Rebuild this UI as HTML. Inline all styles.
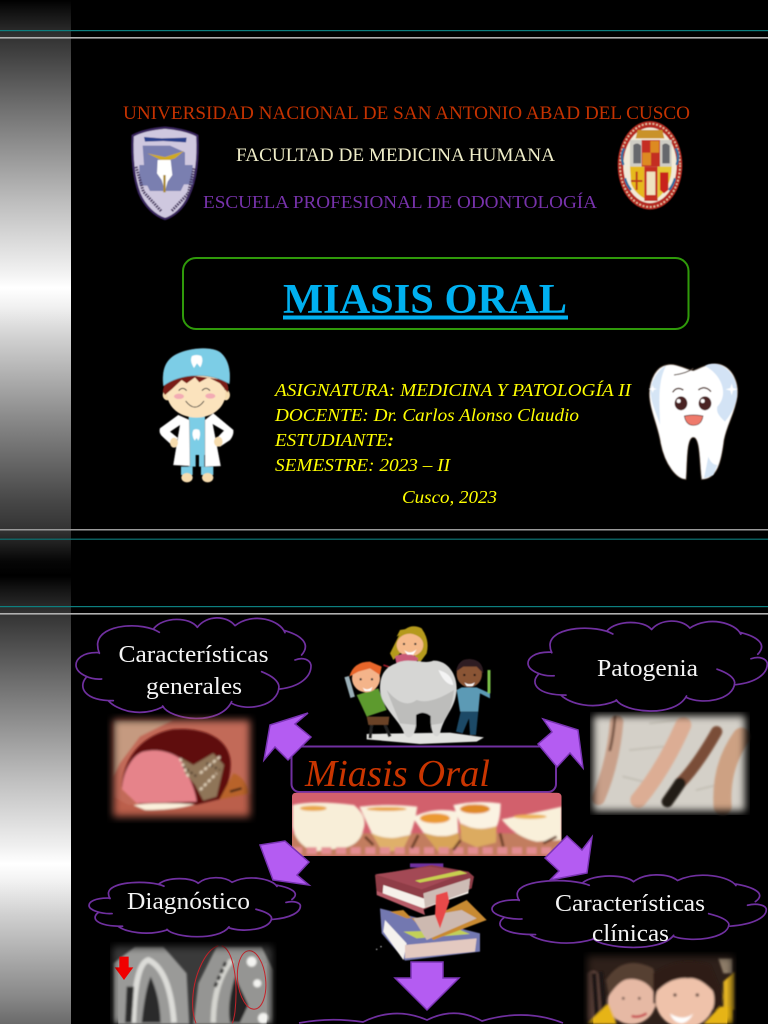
<!DOCTYPE html>
<html lang="es"><head><meta charset="utf-8"><title>Miasis Oral</title>
<style>html,body{margin:0;padding:0;background:#000;width:768px;height:1024px;overflow:hidden}svg{display:block}text{font-family:"Liberation Serif",serif}</style></head>
<body>
<svg xmlns="http://www.w3.org/2000/svg" width="768" height="1024" viewBox="0 0 768 1024">
<defs>
<linearGradient id="side" x1="0" y1="0" x2="0" y2="1">
<stop offset="0" stop-color="#000"/><stop offset=".02" stop-color="#111"/><stop offset=".066" stop-color="#333"/><stop offset=".18" stop-color="#6c6c6c"/><stop offset=".35" stop-color="#bdbdbd"/><stop offset=".47" stop-color="#f0f0f0"/><stop offset=".5" stop-color="#fff"/><stop offset=".53" stop-color="#f2f2f2"/><stop offset=".59" stop-color="#cfcfcf"/><stop offset=".73" stop-color="#888"/><stop offset=".87" stop-color="#474747"/><stop offset=".92" stop-color="#333"/><stop offset=".975" stop-color="#060606"/><stop offset="1" stop-color="#000"/>
</linearGradient>
<linearGradient id="side2" x1="0" y1="0" x2="0" y2="1">
<stop offset="0" stop-color="#000"/><stop offset=".0257" stop-color="#111"/><stop offset=".085" stop-color="#333"/><stop offset=".231" stop-color="#6c6c6c"/><stop offset=".45" stop-color="#bdbdbd"/><stop offset=".604" stop-color="#f0f0f0"/><stop offset=".643" stop-color="#fff"/><stop offset=".681" stop-color="#f2f2f2"/><stop offset=".759" stop-color="#cfcfcf"/><stop offset=".939" stop-color="#888"/><stop offset="1" stop-color="#6a6a6a"/>
</linearGradient>
<filter id="f" x="-2%" y="-20%" width="104%" height="140%"><feGaussianBlur stdDeviation=".3"/></filter>
<filter id="b1" x="-20%" y="-20%" width="140%" height="140%"><feGaussianBlur stdDeviation="3"/></filter>
<filter id="b3" x="-20%" y="-20%" width="140%" height="140%"><feGaussianBlur stdDeviation="12"/></filter>
<filter id="t1" x="-5%" y="-5%" width="110%" height="110%"><feGaussianBlur stdDeviation="1.5"/></filter>
<mask id="m1" maskUnits="userSpaceOnUse" x="280" y="580" width="520" height="400"><rect x="340" y="630" width="410" height="290" fill="#fff" filter="url(#b3)"/></mask>
<mask id="m2" maskUnits="userSpaceOnUse" x="720" y="260" width="560" height="400"><rect x="790" y="318" width="455" height="285" fill="#fff" filter="url(#b3)"/></mask>
<mask id="m3" maskUnits="userSpaceOnUse" x="90" y="300" width="570" height="282"><rect x="128" y="350" width="478" height="232" fill="#fff" filter="url(#b3)"/><rect x="145" y="400" width="445" height="182" fill="#fff"/></mask>
<mask id="m4" maskUnits="userSpaceOnUse" x="630" y="330" width="540" height="252"><rect x="682" y="378" width="438" height="204" fill="#fff" filter="url(#b3)"/><rect x="700" y="420" width="402" height="162" fill="#fff"/></mask>
<clipPath id="ct"><path d="M-114 560Q-114 548-100 548H680Q695 548 695 563V738H-114Z"/></clipPath>
<g id="cloud">
<ellipse cx="582" cy="476" rx="335" ry="140" fill="#000"/>
<path vector-effect="non-scaling-stroke" fill="none" stroke="#7030a0" stroke-width="1.7" stroke-linecap="round" d="M298 428C245 425 228 450 228 465C228 490 270 510 305 507M258 503C235 530 250 572 340 572M325 572C350 600 420 625 490 590M488 588C510 630 660 650 695 575M695 580C740 605 835 590 837 530C835 510 810 495 785 485M840 537C900 530 935 500 933 465C930 450 910 440 885 450M905 435C935 400 900 375 855 362M855 368C840 330 760 305 705 347M705 347C680 315 620 315 592 352M592 352C570 320 490 320 462 355M478 367C430 335 300 340 293 400C292 415 296 425 298 430"/>
</g>
</defs>
<rect width="768" height="1024" fill="#000"/>

<!-- side bands -->
<rect x="0" y="0" width="71" height="576" fill="url(#side)"/>
<rect x="0" y="576" width="71" height="448" fill="url(#side2)"/>
<!-- rules -->
<rect y="30" width="768" height="1.2" fill="#0d7f7f"/>
<rect y="37" width="768" height="1.6" fill="#b0b0b0"/>
<rect y="529" width="768" height="1.5" fill="#9a9a9a"/>
<rect y="538.6" width="768" height="1.2" fill="#0d7272"/>
<rect y="606" width="768" height="1.2" fill="#0d7f7f"/>
<rect y="613" width="768" height="1.6" fill="#b0b0b0"/>

<!-- headings -->
<g filter="url(#f)">
<text x="123" y="119" font-size="18.6" fill="#c43200" textLength="567" lengthAdjust="spacingAndGlyphs">UNIVERSIDAD NACIONAL DE SAN ANTONIO ABAD DEL CUSCO</text>
<text x="236" y="161" font-size="18.6" fill="#efedc8" textLength="319" lengthAdjust="spacingAndGlyphs">FACULTAD DE MEDICINA HUMANA</text>
<text x="203" y="208" font-size="18" fill="#7733ab" textLength="394" lengthAdjust="spacingAndGlyphs">ESCUELA PROFESIONAL DE ODONTOLOGÍA</text>
</g>
<rect x="183" y="258" width="505.500" height="71" rx="13" fill="none" stroke="#2f9a0a" stroke-width="2"/>
<text x="283" y="313" font-size="42.500" font-weight="bold" fill="#00b0f0" textLength="284" lengthAdjust="spacingAndGlyphs">MIASIS ORAL</text>
<rect x="283" y="315.500" width="285" height="4" fill="#00b0f0"/>
<g font-style="italic" font-size="17.700" fill="#ffff00" filter="url(#f)">
<text x="275" y="396" textLength="356" lengthAdjust="spacingAndGlyphs">ASIGNATURA: MEDICINA Y PATOLOGÍA II</text>
<text x="275" y="421" textLength="304" lengthAdjust="spacingAndGlyphs">DOCENTE: Dr. Carlos Alonso Claudio</text>
<text x="275" y="446" textLength="119" lengthAdjust="spacingAndGlyphs">ESTUDIANTE<tspan font-weight="bold">:</tspan></text>
<text x="275" y="471" textLength="175" lengthAdjust="spacingAndGlyphs">SEMESTRE: 2023 – II</text>
<text x="402" y="503" textLength="95" lengthAdjust="spacingAndGlyphs">Cusco, 2023</text>
</g>

<!-- shield logo -->
<g transform="translate(120 115) scale(.3333)" filter="url(#t1)">
<path d="M38 62C70 45 110 40 135 38C165 40 205 48 232 62C235 130 230 190 205 245C190 280 160 305 135 312C105 302 75 275 58 235C40 185 35 130 38 62Z" fill="#cfc8df" stroke="#3a2560" stroke-width="7"/>
<path d="M68 92H150L195 112V150H218V208H192L182 228H90L82 212H58V150H72Z" fill="#7a7fb0"/>
<path d="M82 115L135 126L192 108L165 130L145 136L125 136Z" fill="#cfaa24"/>
<path d="M113 135H152L157 180L143 200L135 228L125 195L111 175Z" fill="#fff"/>
<rect x="130" y="180" width="7" height="52" fill="#a8892e"/>
<path d="M72 66L125 70L200 68L198 82L130 78L75 80Z" fill="#2c3f8c"/>
<path d="M48 155L70 230L125 290M222 160L205 235L155 288" fill="none" stroke="#44365e" stroke-width="9" stroke-dasharray="5 3"/>
</g>

<!-- seal logo -->
<g transform="translate(605 115) scale(.3333)" filter="url(#t1)">
<ellipse cx="135" cy="151" rx="97" ry="133" fill="#b52a20"/>
<ellipse cx="135" cy="151" rx="90" ry="125" fill="none" stroke="#e8c8a8" stroke-width="5" stroke-dasharray="5 6"/>
<ellipse cx="135" cy="151" rx="80" ry="113" fill="#f2ead8"/>
<path d="M98 45L172 45L178 70H92Z" fill="#c9922a"/>
<rect x="75" y="75" width="125" height="80" fill="#cfcdc4"/>
<path d="M85 90Q97 80 108 92V145H85ZM172 90Q182 80 194 92V145H172Z" fill="#66686c"/>
<rect x="110" y="75" width="55" height="80" fill="#c42f22"/>
<rect x="136" y="78" width="26" height="35" fill="#dd8a22"/>
<rect x="112" y="113" width="26" height="38" fill="#dd8a22"/>
<path d="M75 155H118V250Q90 235 78 205Z" fill="#e6b91b"/>
<rect x="118" y="155" width="40" height="103" fill="#c42f22"/>
<rect x="125" y="170" width="26" height="70" fill="#efe3c0"/>
<path d="M158 155H200Q200 215 158 250Z" fill="#e6c830"/>
<path d="M165 172H190V225L177 235L165 225Z" fill="#c8201c"/>
<path d="M95 170V225M78 198H112" stroke="#bb3b1f" stroke-width="6"/>
<path d="M58 100Q45 120 55 150M212 100Q225 120 215 150M60 190Q65 210 78 225M210 190Q205 210 192 225" stroke="#2a6ea0" stroke-width="7" fill="none"/>
</g>

<!-- doctor -->
<g transform="translate(130 340) scale(.3333)" filter="url(#t1)">
<path d="M153 380H188V405H153ZM213 380H250V405H213Z" fill="#7ccde6"/>
<ellipse cx="171" cy="413" rx="17" ry="14" fill="#f6dcae"/><ellipse cx="233" cy="413" rx="17" ry="14" fill="#f6dcae"/>
<path d="M176 230H225V345H223V380H207V345H197V380H176Z" fill="#7ccde6"/>
<path d="M145 225L90 265Q85 280 100 292L125 315L145 295L120 275L150 255L130 375L180 378L178 240ZM250 220L310 270Q312 285 300 300L270 320L255 300L282 272L248 252L272 378L225 380L225 240Z" fill="#fff" stroke="#999" stroke-width="1.500"/>
<ellipse cx="132" cy="308" rx="12" ry="15" fill="#f6dcae"/><ellipse cx="265" cy="305" rx="13" ry="15" fill="#f6dcae"/>
<path d="M190 270Q198 265 208 270Q214 285 205 302L200 294L194 302Q183 285 190 270Z" fill="#fff"/>
<ellipse cx="112" cy="165" rx="14" ry="16" fill="#f6dcae"/><ellipse cx="288" cy="165" rx="12" ry="16" fill="#f6dcae"/>
<ellipse cx="199" cy="163" rx="87" ry="70" fill="#fbe3bd"/>
<path d="M98 155Q105 115 135 100L285 120Q300 140 293 158L270 130L235 112L208 127L195 112L170 130L155 120L125 148L105 165Z" fill="#7a1f12"/>
<path d="M100 138C95 90 105 55 150 38C190 22 250 20 272 38C295 58 303 92 298 132C240 95 150 100 100 138Z" fill="#7ccde6" stroke="#5b7c8a" stroke-width="1.500"/>
<path d="M186 48Q200 42 214 48Q222 62 211 82L201 70L192 84Q178 62 186 48Z" fill="#fff"/>
<ellipse cx="147" cy="169" rx="15" ry="8" fill="#f3abb4"/><ellipse cx="241" cy="168" rx="15" ry="8" fill="#f3abb4"/>
<path d="M146 152Q158 138 170 152M216 152Q228 138 240 152M167 183Q195 220 222 183" fill="none" stroke="#333" stroke-width="3"/>
</g>

<!-- tooth -->
<g transform="translate(630 350) scale(.3333)" filter="url(#t1)">
<path d="M110 45C140 38 170 60 190 62C210 55 240 36 270 43C310 55 327 100 322 140C315 190 292 220 282 270C274 335 262 388 215 388C208 350 212 262 190 262C168 262 172 350 168 388C140 388 105 345 92 280C84 225 58 180 58 130C60 85 80 50 110 45Z" fill="#fff" stroke="#6b5a4c" stroke-width="3"/>
<path d="M225 48C240 38 265 40 280 50C312 70 325 105 320 145C312 180 300 195 285 215C270 200 258 190 262 170C300 130 270 70 225 48Z" fill="#d3e3f5"/>
<path d="M108 48C80 60 60 100 62 130C65 165 80 190 90 225C90 170 80 100 108 48Z" fill="#d5e5f5"/>
<path d="M235 320C240 335 250 345 262 345L250 375L222 385Z" fill="#d5e5f5"/>
<path d="M132 75Q170 70 190 55" fill="none" stroke="#5a4a40" stroke-width="3"/>
<ellipse cx="153" cy="160" rx="19" ry="21" fill="#4a2020"/><ellipse cx="225" cy="160" rx="19" ry="21" fill="#4a2020"/>
<circle cx="146" cy="153" r="6" fill="#fff"/><circle cx="218" cy="153" r="6" fill="#fff"/>
<path d="M128 127Q140 108 160 120M205 120Q225 105 243 125" fill="none" stroke="#4a2a20" stroke-width="4"/>
<path d="M163 198Q190 192 219 198Q215 226 190 226Q168 226 163 198Z" fill="#ef7a6c" stroke="#4a2020" stroke-width="2"/>
<path d="M305 100L309 114L323 118L309 122L305 136L301 122L287 118L301 114Z" fill="#fff"/>
<path d="M68 105L71 114L80 117L71 120L68 129L65 120L56 117L65 114Z" fill="#fff"/>
</g>

<!-- clouds -->
<use href="#cloud" transform="translate(0 510) scale(.3333)"/>
<use href="#cloud" transform="translate(528 620) scale(.3394 .298) translate(-228 -320)"/>
<use href="#cloud" transform="translate(89 877) scale(.2998 .1955) translate(-228 -320)"/>

<!-- mouth photo -->
<g transform="translate(0 510) scale(.3333)" mask="url(#m1)">
<rect x="320" y="610" width="450" height="330" fill="#c26a58"/>
<g filter="url(#b1)">
<path d="M340 630H520L420 680L360 760L340 800Z" fill="#c59a80"/>
<path d="M365 830C370 750 420 675 520 658C620 650 690 690 692 760C692 820 670 865 640 885L420 885Z" fill="#5e100e"/>
<path d="M366 838C368 790 395 735 430 725C470 715 510 725 540 745C560 790 585 830 590 875L410 880Z" fill="#e6838a"/>
<path d="M545 745L580 765L640 730L672 765L650 860L610 872L585 825L555 790Z" fill="#8f7558"/>
<path d="M540 745L565 800M600 790L660 740M600 840L650 790" stroke="#e8d8c0" stroke-width="7" fill="none" stroke-dasharray="10 7"/>
<path d="M550 770L590 800M620 760L660 780" stroke="#2c1c14" stroke-width="6" fill="none" stroke-dasharray="6 8"/>
<path d="M700 790C730 800 745 830 745 850L680 885L655 875Z" fill="#b8632c"/>
<path d="M690 845L725 835" stroke="#111" stroke-width="6"/>
<path d="M385 885Q480 875 590 885L650 870L760 850V925H340V860Z" fill="#bb5f4c"/>
<path d="M400 885Q480 876 585 883Q510 903 435 900Z" fill="#fbf1dc"/>
</g></g>

<!-- worms photo -->
<g transform="translate(330 610) scale(.3333)" mask="url(#m2)">
<rect x="780" y="305" width="480" height="310" fill="#d4d0c8"/>
<g filter="url(#b1)" fill="none" stroke-linecap="round">
<path d="M900 420L1000 410M880 500L960 520M1100 540L1180 520M960 340L1040 330" stroke="#c4c0b6" stroke-width="6"/>
<path d="M860 335Q850 460 805 565" stroke="#c9a08a" stroke-width="40"/>
<path d="M855 320Q850 380 840 420" stroke="#6f5040" stroke-width="8"/>
<path d="M1060 345Q1000 480 925 570" stroke="#dcad94" stroke-width="48"/>
<path d="M1160 365Q1100 470 1050 520" stroke="#7a4e38" stroke-width="34"/>
<path d="M1050 520Q1030 550 1012 575" stroke="#221a18" stroke-width="34"/>
<path d="M1235 380Q1170 470 1178 590" stroke="#cda183" stroke-width="54"/>
</g></g>

<!-- title box + teeth -->
<rect x="291.500" y="746.500" width="264.500" height="45.500" rx="8" fill="#000" stroke="#7030a0" stroke-width="2"/>
<text x="305" y="786" font-size="38" font-style="italic" fill="#c93400" textLength="185" lengthAdjust="spacingAndGlyphs" filter="url(#f)">Miasis Oral</text>

<g transform="translate(330 610) scale(.3333)" clip-path="url(#ct)">
<rect x="-114" y="548" width="809" height="190" fill="#d2606c"/>
<g filter="url(#b1)">
<rect x="-114" y="670" width="809" height="68" fill="#c27d5e"/>
<path d="M-112 585Q-50 570 72 585Q115 620 100 660Q90 700 50 712L-50 725Q-105 700 -112 650Z" fill="#f8eed8"/>
<path d="M88 590Q170 580 262 590Q255 640 240 675L165 690L125 670Z" fill="#f9f0dc"/>
<path d="M125 670Q175 695 240 675L222 712Q190 730 155 722Z" fill="#dfb06a"/>
<path d="M248 622Q310 590 382 605L385 668Q340 690 280 668Z" fill="#faf2e0"/>
<path d="M280 668Q340 690 385 668L390 708L325 725Z" fill="#d8a458"/>
<path d="M370 585Q440 570 512 580Q512 625 500 650L440 660L390 640Z" fill="#fbf3e2"/>
<path d="M388 640Q445 668 500 648L498 698L440 712L395 692Z" fill="#dcab60"/>
<path d="M515 628Q600 612 695 590V690L620 695Q555 680 515 628Z" fill="#f9f0da"/>
<ellipse cx="435" cy="597" rx="45" ry="14" fill="#e08a28"/>
<ellipse cx="315" cy="625" rx="45" ry="15" fill="#eb9a30"/>
<ellipse cx="170" cy="597" rx="60" ry="6" fill="#e9a648"/>
<ellipse cx="600" cy="620" rx="50" ry="7" fill="#ecb35a"/>
<ellipse cx="-50" cy="595" rx="40" ry="8" fill="#eaa84c"/>
<path d="M-114 722H695" stroke="#e38d92" stroke-width="20" stroke-dasharray="30 14"/>
<path d="M105 680L130 705M265 675L245 715M392 690L370 720M510 670L520 710M640 700L680 680" stroke="#6b3c28" stroke-width="8" fill="none"/>
</g></g>

<!-- kids -->
<g transform="translate(330 610) scale(.3333)" filter="url(#t1)">
<path d="M110 372L360 368L462 382L440 395L270 402L110 388Z" fill="#e3e3e0"/>
<path d="M205 80Q235 35 275 55Q300 90 290 130L268 160L250 130H210L190 150L180 130Z" fill="#b59a1a"/>
<ellipse cx="240" cy="105" rx="40" ry="34" fill="#f5b98a"/>
<path d="M200 80Q240 55 280 90L275 70L240 55L210 60Z" fill="#b59a1a"/>
<path d="M195 140Q230 120 265 145L255 165H200Z" fill="#c95a78"/>
<path d="M222 120Q240 135 260 118L250 134H232Z" fill="#fff"/>
<circle cx="222" cy="102" r="3.500" fill="#333"/><circle cx="256" cy="102" r="3.500" fill="#333"/>
<path d="M80 255L145 235L170 300L110 320Z" fill="#5d9a2e"/>
<path d="M110 320H178L175 345H115Z" fill="#6a4326"/>
<path d="M125 345L120 385M165 345L180 380" stroke="#222" stroke-width="10"/>
<ellipse cx="108" cy="205" rx="42" ry="42" fill="#f4b48a"/>
<path d="M58 200Q70 155 120 155L155 170L150 195L120 175L85 185Z" fill="#e8662a"/>
<circle cx="92" cy="208" r="3.500" fill="#333"/><circle cx="126" cy="208" r="3.500" fill="#333"/>
<path d="M98 232Q112 245 128 230L122 243H104Z" fill="#fff"/>
<path d="M50 200L68 262" stroke="#9bb0b8" stroke-width="14"/>
<path d="M160 165L232 190" stroke="#a51f2a" stroke-width="5"/>
<path d="M198 160C240 140 280 165 310 152C350 150 382 190 380 240C375 300 345 310 330 370C320 390 305 375 303 345C300 305 265 300 258 345C255 380 235 395 222 370C210 330 150 290 150 235C150 190 170 170 198 160Z" fill="#d6d6d4"/>
<path d="M170 240Q220 300 260 270Q300 285 372 240Q365 310 335 340L303 345C300 305 265 300 258 345L210 340Z" fill="#bdbdbb"/>
<path d="M325 180Q365 190 370 225Q345 225 325 180Z" fill="#f4f4f4"/>
<path d="M258 315Q280 300 302 318V365H258Z" fill="#000"/>
<path d="M380 240L395 232H440L480 250V265L450 250L445 305H390Z" fill="#5b9ab5"/>
<path d="M392 305H445L438 375H420L417 325L398 370L378 365Z" fill="#1c4a66"/>
<ellipse cx="418" cy="192" rx="38" ry="40" fill="#8a5436"/>
<path d="M378 185Q385 145 420 147Q460 150 460 190L440 170H400Z" fill="#2e1d22"/>
<path d="M403 217Q418 228 435 217L428 228H410Z" fill="#fff"/>
<circle cx="403" cy="195" r="3.500" fill="#111"/><circle cx="434" cy="195" r="3.500" fill="#111"/>
<path d="M477 180V250" stroke="#7cc24a" stroke-width="9"/>
</g>

<!-- books -->
<g transform="translate(360 830) scale(.3333)" filter="url(#t1)">
<path d="M150 100H250V112H150Z" fill="#7030a0"/>
<path d="M60 235L360 310V365L135 392L65 310Z" fill="#7378b0"/>
<path d="M70 305L130 390L140 340L75 270Z" fill="#f5f2ee"/>
<path d="M135 345L350 325L345 365L135 385Z" fill="#e3c9c0"/>
<path d="M130 305L170 325L330 312L300 300Z" fill="#c2d058"/>
<path d="M90 245L130 240L220 330L380 270L320 210L220 260L140 265Z" fill="#c88a30"/>
<path d="M160 265L200 330L350 265L305 240Z" fill="#cdb9b0"/>
<path d="M45 135L215 105L325 125L342 140L335 175L190 240L50 190Z" fill="#8f3c46"/>
<path d="M45 133L210 110L318 128L185 178Z" fill="#a34a55"/>
<path d="M165 152L300 122L322 130L180 158Z" fill="#c8d050"/>
<path d="M70 165L190 205L330 145L325 190L190 235L68 190Z" fill="#f6f0ea"/>
<path d="M190 190L330 145L325 185L195 232Z" fill="#cdbcb5"/>
<path d="M50 183L190 235L195 255L50 195Z" fill="#b75b68"/>
<path d="M228 195L262 185L268 215L240 295L225 255Z" fill="#e8484a"/>
<circle cx="50" cy="358" r="1.800" fill="#fff"/><circle cx="63" cy="350" r="1.800" fill="#fff"/>
</g>

<!-- CT photo -->
<g transform="translate(70 830) scale(.3333)" mask="url(#m3)">
<rect x="120" y="335" width="500" height="247" fill="#3a3a3a"/>
<g filter="url(#b1)">
<path d="M130 400L195 350H280L350 430L358 582H130Z" fill="#9a9a98"/>
<path d="M385 460L440 350H575L610 420V582H370Z" fill="#959593"/>
<path d="M190 578Q195 400 235 390Q300 420 312 578" fill="none" stroke="#dcdcd8" stroke-width="17"/>
<path d="M215 578Q225 480 242 440Q270 500 272 578Z" fill="#2c2c2c"/>
<path d="M170 470L192 470L185 578H165Z" fill="#2a2a2a"/>
<path d="M430 578Q430 460 485 390" fill="none" stroke="#d4d4cf" stroke-width="16"/>
<path d="M435 470L470 390" stroke="#333" stroke-width="10" stroke-dasharray="14 8" fill="none"/>
<path d="M495 440Q470 520 480 578H510L535 525Z" fill="#222"/>
<circle cx="545" cy="395" r="15" fill="#f3f3f0"/><circle cx="562" cy="460" r="12" fill="#f3f3f0"/><circle cx="580" cy="565" r="16" fill="#f3f3f0"/>
</g>
<path d="M148 380H176V412H190L162 450L134 412H148Z" fill="#f00000"/>
<path d="M445 347C405 360 368 440 368 520C368 545 372 565 378 580M455 347C490 360 505 450 495 545C493 560 490 572 487 580" fill="none" stroke="#c5232a" stroke-width="3"/>
<ellipse cx="545" cy="450" rx="42" ry="88" transform="rotate(-6 545 450)" fill="none" stroke="#c5232a" stroke-width="3"/>
</g>

<!-- girls photo -->
<g transform="translate(360 830) scale(.3333)" mask="url(#m4)">
<rect x="670" y="365" width="460" height="217" fill="#2e201a"/>
<g filter="url(#b1)">
<path d="M1075 385H1118V430H1090Z" fill="#8d7c68"/>
<path d="M1090 455L1125 425V540L1090 530Z" fill="#e0b020"/>
<path d="M680 430Q715 400 730 470L720 582H680Z" fill="#5a4038"/>
<path d="M738 450Q790 370 880 415L900 520L850 570H760Z" fill="#574032"/>
<ellipse cx="815" cy="515" rx="72" ry="68" fill="#e6b9a4"/>
<path d="M745 480Q775 405 815 415Q860 420 885 480Q845 435 815 445Q780 445 745 500Z" fill="#574032"/>
<path d="M880 430Q960 375 1050 405L1090 500L1070 540L880 520Z" fill="#2e1a14"/>
<ellipse cx="975" cy="510" rx="88" ry="84" fill="#efc2aa"/>
<path d="M885 490Q900 420 980 415Q1055 420 1065 490Q1020 440 985 445Q930 440 885 490Z" fill="#2e1a14"/>
<path d="M930 551Q970 575 1000 551Q985 578 965 580Q940 578 930 551Z" fill="#fff"/>
<path d="M815 558Q835 565 860 550" stroke="#c43b45" stroke-width="7" fill="none"/>
<path d="M702 430L712 582M722 425L736 582" stroke="#1c1312" stroke-width="14"/>
<path d="M680 582L745 520L770 582ZM1030 582L1080 530L1120 530V582Z" fill="#e6b414"/>
<circle cx="790" cy="505" r="4" fill="#503a34"/><circle cx="838" cy="505" r="4" fill="#503a34"/><circle cx="945" cy="495" r="5" fill="#503a34"/><circle cx="1012" cy="495" r="5" fill="#503a34"/>
</g></g>

<!-- arrows -->
<g fill="#b45cf2" stroke="#7a34b4" stroke-width="1.500" stroke-linejoin="miter">
<path d="M308 713L270 725L264 760L275 747L288 760L311 737L295 724Z"/>
<path d="M543 719L578 730L583 768L570 753L557 767L538 744L552 732Z"/>
<path d="M260 845L285 841L309 862L297 875L309 885L273 880Z"/>
<path d="M545 858L567 836L582 850L592 837L587 873L550 880L559 871Z"/>
<path d="M411 962H443V978H459L427 1010L395 978H411Z"/>
</g>
<use href="#cloud" transform="translate(492 874) scale(.3890 .2404) translate(-228 -320)"/>
<path d="M299 1023Q330 1017 363 1022Q395 1006 427 1020Q455 1006 482 1021Q525 1008 563 1023" fill="none" stroke="#7030a0" stroke-width="1.700"/>

<g fill="#f4f4f4" font-size="24" filter="url(#f)">
<text x="118.500" y="662" textLength="150" lengthAdjust="spacingAndGlyphs">Características</text>
<text x="146" y="694" textLength="96" lengthAdjust="spacingAndGlyphs">generales</text>
<text x="597" y="676" textLength="101" lengthAdjust="spacingAndGlyphs">Patogenia</text>
<text x="127" y="909" textLength="123" lengthAdjust="spacingAndGlyphs">Diagnóstico</text>
<text x="555" y="911" textLength="150" lengthAdjust="spacingAndGlyphs">Características</text>
<text x="592" y="941" textLength="77" lengthAdjust="spacingAndGlyphs">clínicas</text>
</g>
</svg>
</body></html>
